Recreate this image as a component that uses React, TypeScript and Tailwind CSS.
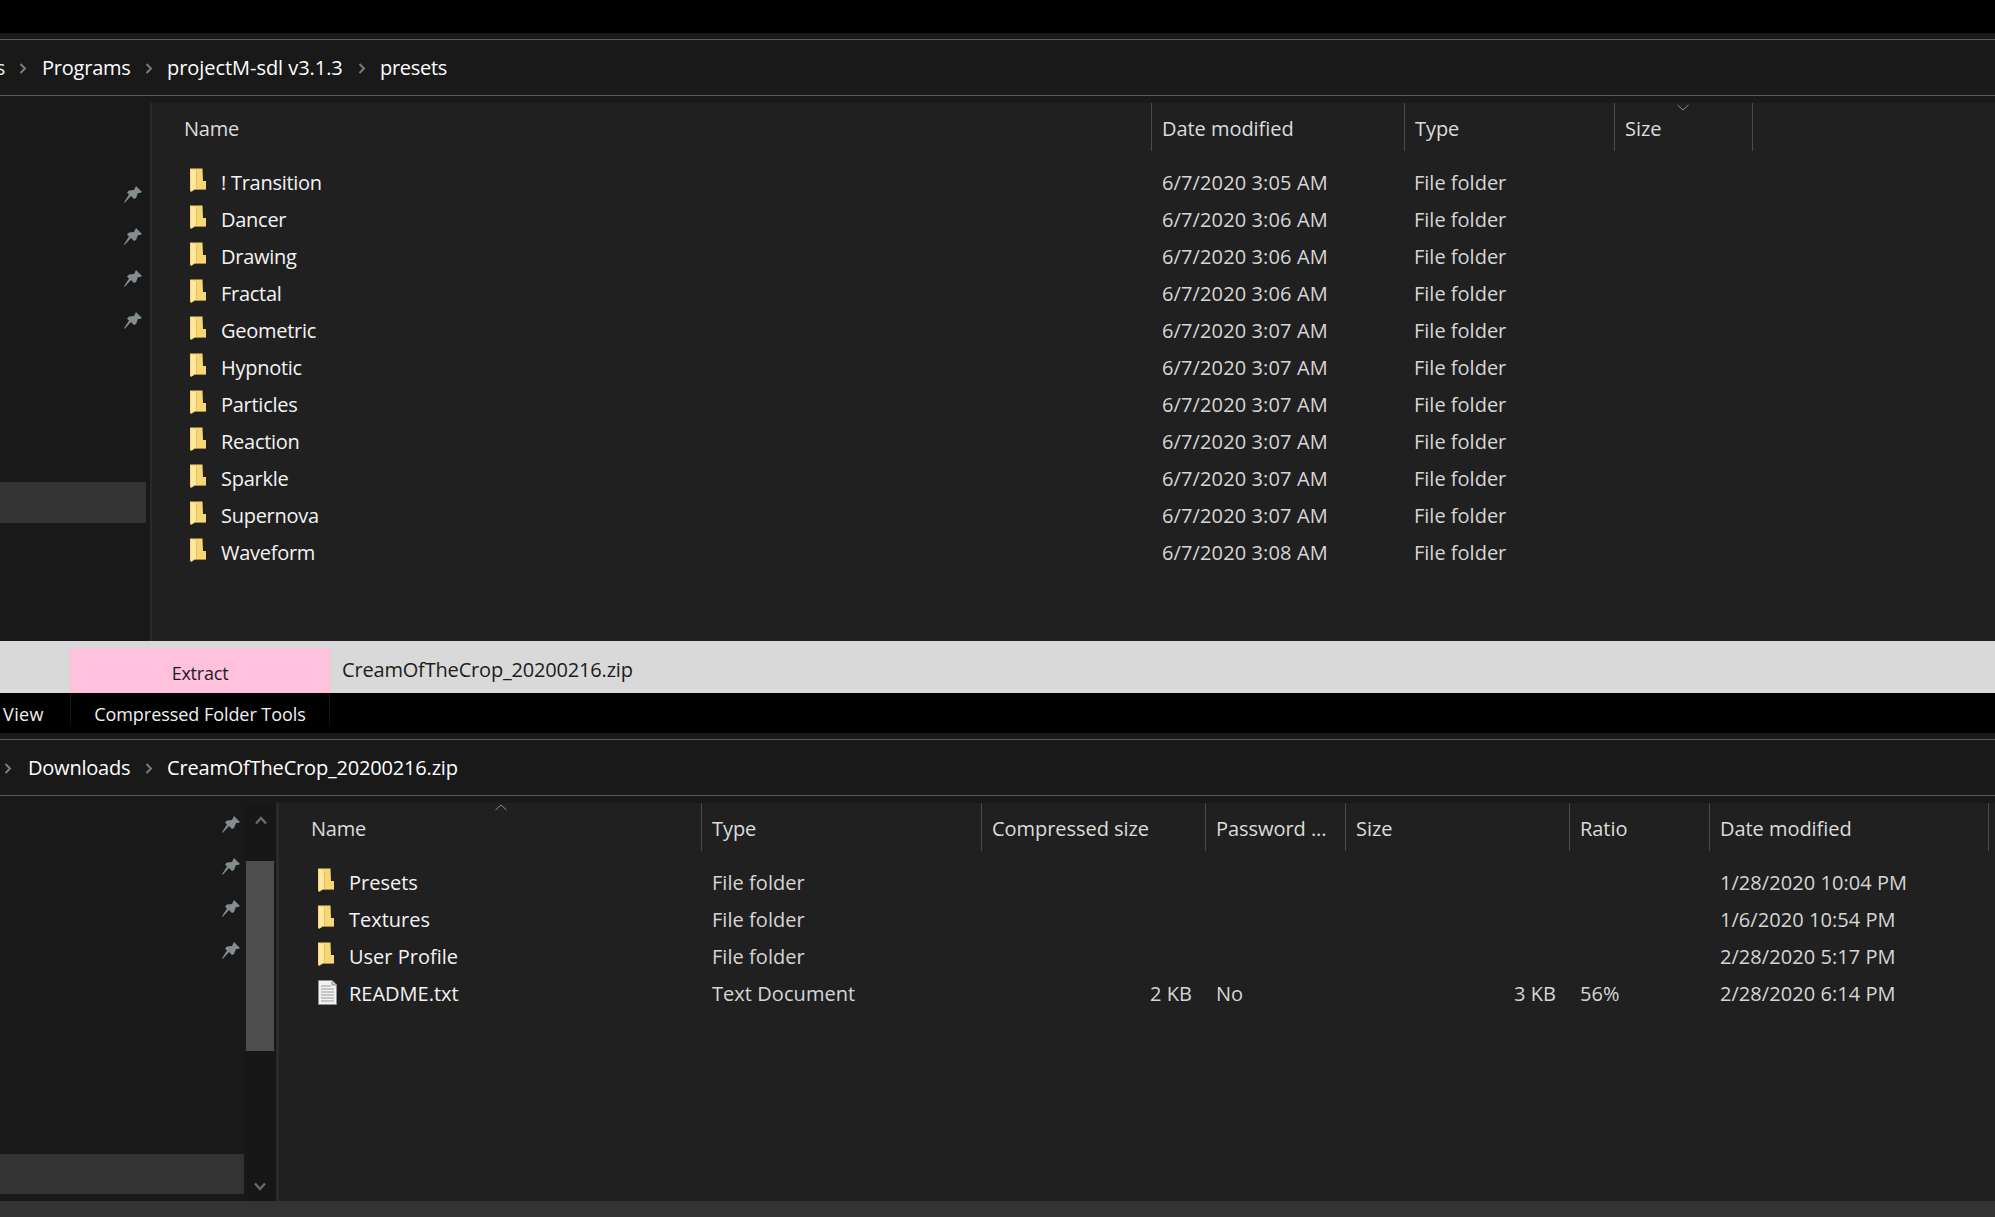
const upperRows = [
  ['! Transition', '6/7/2020 3:05 AM'],
  ['Dancer', '6/7/2020 3:06 AM'],
  ['Drawing', '6/7/2020 3:06 AM'],
  ['Fractal', '6/7/2020 3:06 AM'],
  ['Geometric', '6/7/2020 3:07 AM'],
  ['Hypnotic', '6/7/2020 3:07 AM'],
  ['Particles', '6/7/2020 3:07 AM'],
  ['Reaction', '6/7/2020 3:07 AM'],
  ['Sparkle', '6/7/2020 3:07 AM'],
  ['Supernova', '6/7/2020 3:07 AM'],
  ['Waveform', '6/7/2020 3:08 AM'],
]

const lowerRows = [
  { name: 'Presets', type: 'File folder', comp: '', pass: '', size: '', ratio: '', date: '1/28/2020 10:04 PM' },
  { name: 'Textures', type: 'File folder', comp: '', pass: '', size: '', ratio: '', date: '1/6/2020 10:54 PM' },
  { name: 'User Profile', type: 'File folder', comp: '', pass: '', size: '', ratio: '', date: '2/28/2020 5:17 PM' },
  { name: 'README.txt', type: 'Text Document', comp: '2 KB', pass: 'No', size: '3 KB', ratio: '56%', date: '2/28/2020 6:14 PM', file: true },
]

const FolderIcon = () => (
  <svg width="16" height="24" viewBox="0 0 16 24" className="shrink-0 -mt-[5px]">
    <path d="M0 0.5 H12.5 L13 13 H16 V21.5 H5 L1 24 L0 22.5 Z" fill="#f7d674" />
    <path d="M1 1 L6 3 V20 L1 23 Z" fill="#ffe8a0" />
    <path d="M6 3 H7 V20 H6 Z" fill="#e6bf5c" />
    <path d="M5 21 H16 V22 H5 Z" fill="#a98c48" />
  </svg>
)

const DocIcon = () => (
  <svg width="19" height="25" viewBox="0 0 19 25" className="shrink-0 -mt-[3px]">
    <path d="M0.5 0.5 H14 L18.5 5 V24.5 H0.5 Z" fill="#f2f2f2" stroke="#8f8f8f" />
    <path d="M14 0.5 V5 H18.5" fill="#cfcfcf" stroke="#8f8f8f" />
    <path d="M3 6 H13 M3 9 H16 M3 12 H16 M3 15 H16 M3 18 H16 M3 21 H16" stroke="#9a9a9a" strokeWidth="1" />
  </svg>
)

const Crumb = () => (
  <svg width="8" height="11" viewBox="0 0 8 11" className="shrink-0">
    <path d="M1.5 1 L6 5.5 L1.5 10" fill="none" stroke="#7c7c7c" strokeWidth="2" />
  </svg>
)

const PinIcon = () => (
  <svg width="18" height="18" viewBox="0 0 18 18">
    <path d="M12 0 L18 6 L16 7 L14 7 L12 12 L10 13 L7 10 L1 16.5 L0 17 L0.5 15.5 L5 8.5 L3 6.5 L5 4.5 L10 4 L11 2 Z" fill="#858c90" />
  </svg>
)

const Pins = ({ className }: { className: string }) => (
  <div className={`flex flex-col gap-[24px] ${className}`}>
    {[0, 1, 2, 3].map((i) => (
      <PinIcon key={i} />
    ))}
  </div>
)

const Head = ({ label, last }: { label: string; last?: boolean }) => (
  <div className={`h-[48px] border-l border-[#4a4a4a] pl-[10px] pt-[3px] flex items-center text-[#dcdcdc] tracking-[-0.05px] ${last ? 'border-r' : ''}`}>
    {label}
  </div>
)

const Caret = ({ up, className }: { up?: boolean; className: string }) => (
  <svg width="12" height="7" viewBox="0 0 12 7" className={`absolute ${className}`}>
    <path d={up ? 'M0.5 6 L6 1 L11.5 6' : 'M0.5 1 L6 6 L11.5 1'} fill="none" stroke="#8a8a8a" strokeWidth="1" />
  </svg>
)

export default function App() {
  return (
    <div className="w-[1995px] h-[1217px] overflow-hidden bg-[#191919] text-[20px] leading-[28px] text-white flex flex-col font-['Open_Sans','Liberation_Sans',sans-serif] tracking-[-0.22px]">
      {/* upper window */}
      <div className="h-[33px] bg-black shrink-0" />
      <div className="mt-[6px] h-[57px] shrink-0 border-y border-[#5a5a5a] flex items-center pt-[1px]">
        <span className="w-[5px] shrink-0 overflow-hidden text-[#f0f0f0] flex justify-end">s</span>
        <span className="ml-[14px]"><Crumb /></span>
        <span className="ml-[15px] w-[103px]">Programs</span>
        <span><Crumb /></span>
        <span className="ml-[14px] w-[191px] tracking-[-0.05px]">projectM-sdl v3.1.3</span>
        <span><Crumb /></span>
        <span className="ml-[14px] tracking-[-0.3px]">presets</span>
      </div>

      <div className="mt-[7px] h-[538px] shrink-0 flex">
        <div className="w-[150px] shrink-0 relative">
          <Pins className="absolute left-[124px] top-[83px]" />
          <div className="absolute left-0 right-[4px] top-[379px] h-[41px] bg-[#333333]" />
        </div>
        <div className="w-[2px] bg-[#2a2a2a] shrink-0" />
        <div className="flex-1 bg-[#202020] relative">
          <Caret className="left-[1525px] top-[1px]" />
          <div className="grid grid-cols-[999px_253px_210px_139px]">
            <div className="h-[48px] pl-[32px] pt-[3px] flex items-center text-[#dcdcdc]">Name</div>
            <Head label="Date modified" />
            <Head label="Type" />
            <Head label="Size" last />
          </div>
          <div className="mt-[13px]">
            {upperRows.map(([name, date]) => (
              <div key={name} className="grid grid-cols-[999px_253px_210px_139px] h-[37px] items-center">
                <div className="pl-[38px] flex items-center gap-[15px] text-[#f4f4f4] tracking-[-0.27px]">
                  <FolderIcon />
                  <span>{name}</span>
                </div>
                <div className="pl-[11px] text-[#d6d6d6] tracking-[0.12px]">{date}</div>
                <div className="pl-[10px] text-[#d6d6d6] tracking-[0px]">File folder</div>
                <div />
              </div>
            ))}
          </div>
        </div>
      </div>

      {/* ribbon of the lower window */}
      <div className="h-[52px] shrink-0 bg-[#d9d9d9] pt-[7px] flex items-stretch text-black">
        <div className="ml-[70px] w-[260px] bg-[#ffc1dc] flex items-center justify-center pt-[5px] text-[18px] text-[#1c1c1c]">Extract</div>
        <div className="ml-[12px] -mt-[2px] flex items-center text-[#1c1c1c] tracking-[-0.18px]">CreamOfTheCrop_20200216.zip</div>
      </div>
      <div className="h-[40px] shrink-0 bg-black flex text-[18px] text-[#f0f0f0] tracking-[-0.05px]">
        <div className="w-[70px] h-[32px] pl-[3px] pt-[7px] box-border tracking-[0.4px]">View</div>
        <div className="w-[260px] h-[32px] border-x border-[#1a1a1a] flex justify-center pt-[7px] box-border">Compressed Folder Tools</div>
      </div>

      {/* lower window */}
      <div className="mt-[6px] h-[57px] shrink-0 border-y border-[#5a5a5a] flex items-center pt-[1px]">
        <span className="ml-[4px]"><Crumb /></span>
        <span className="ml-[16px] w-[117px]">Downloads</span>
        <span><Crumb /></span>
        <span className="ml-[14px] tracking-[-0.18px]">CreamOfTheCrop_20200216.zip</span>
      </div>

      <div className="mt-[7px] h-[398px] shrink-0 flex">
        <div className="w-[244px] shrink-0 relative">
          <Pins className="absolute left-[222px] top-[13px]" />
          <div className="absolute left-0 right-0 top-[351px] h-[40px] bg-[#333333]" />
        </div>
        <div className="w-[2px] shrink-0" />
        <div className="w-[30px] shrink-0 bg-[#171717] flex flex-col items-center relative">
          <svg width="12" height="9" viewBox="0 0 12 9" className="mt-[13px]">
            <path d="M1 7.5 L6 2 L11 7.5" fill="none" stroke="#6a6a6a" strokeWidth="2.4" />
          </svg>
          <div className="absolute left-0 w-[28px] top-[58px] h-[190px] bg-[#4d4d4d]" />
          <svg width="12" height="9" viewBox="0 0 12 9" className="absolute top-[379px] left-[8px]">
            <path d="M1 1.5 L6 7 L11 1.5" fill="none" stroke="#6a6a6a" strokeWidth="2.4" />
          </svg>
        </div>
        <div className="w-[3px] bg-[#2a2a2a] shrink-0" />
        <div className="flex-1 bg-[#202020] relative">
          <Caret up className="left-[216px] top-[1px]" />
          <div className="grid grid-cols-[422px_280px_224px_140px_224px_140px_280px]">
            <div className="h-[48px] pl-[32px] pt-[3px] flex items-center text-[#dcdcdc]">Name</div>
            <Head label="Type" />
            <Head label="Compressed size" />
            <Head label="Password ..." />
            <Head label="Size" />
            <Head label="Ratio" />
            <Head label="Date modified" last />
          </div>
          <div className="mt-[13px]">
            {lowerRows.map((r) => (
              <div key={r.name} className="grid grid-cols-[422px_280px_224px_140px_224px_140px_280px] h-[37px] items-center text-[#d6d6d6] tracking-[0.05px]">
                <div className="pl-[39px] flex items-center text-[#f4f4f4] tracking-[0px]">
                  <span className="w-[31px] shrink-0 flex">{r.file ? <DocIcon /> : <FolderIcon />}</span>
                  <span>{r.name}</span>
                </div>
                <div className="pl-[11px]">{r.type}</div>
                <div className="pr-[13px] text-right">{r.comp}</div>
                <div className="pl-[11px]">{r.pass}</div>
                <div className="pr-[13px] text-right">{r.size}</div>
                <div className="pl-[11px]">{r.ratio}</div>
                <div className="pl-[11px]">{r.date}</div>
              </div>
            ))}
          </div>
        </div>
      </div>
      <div className="h-[16px] bg-[#333333] shrink-0" />
    </div>
  )
}
